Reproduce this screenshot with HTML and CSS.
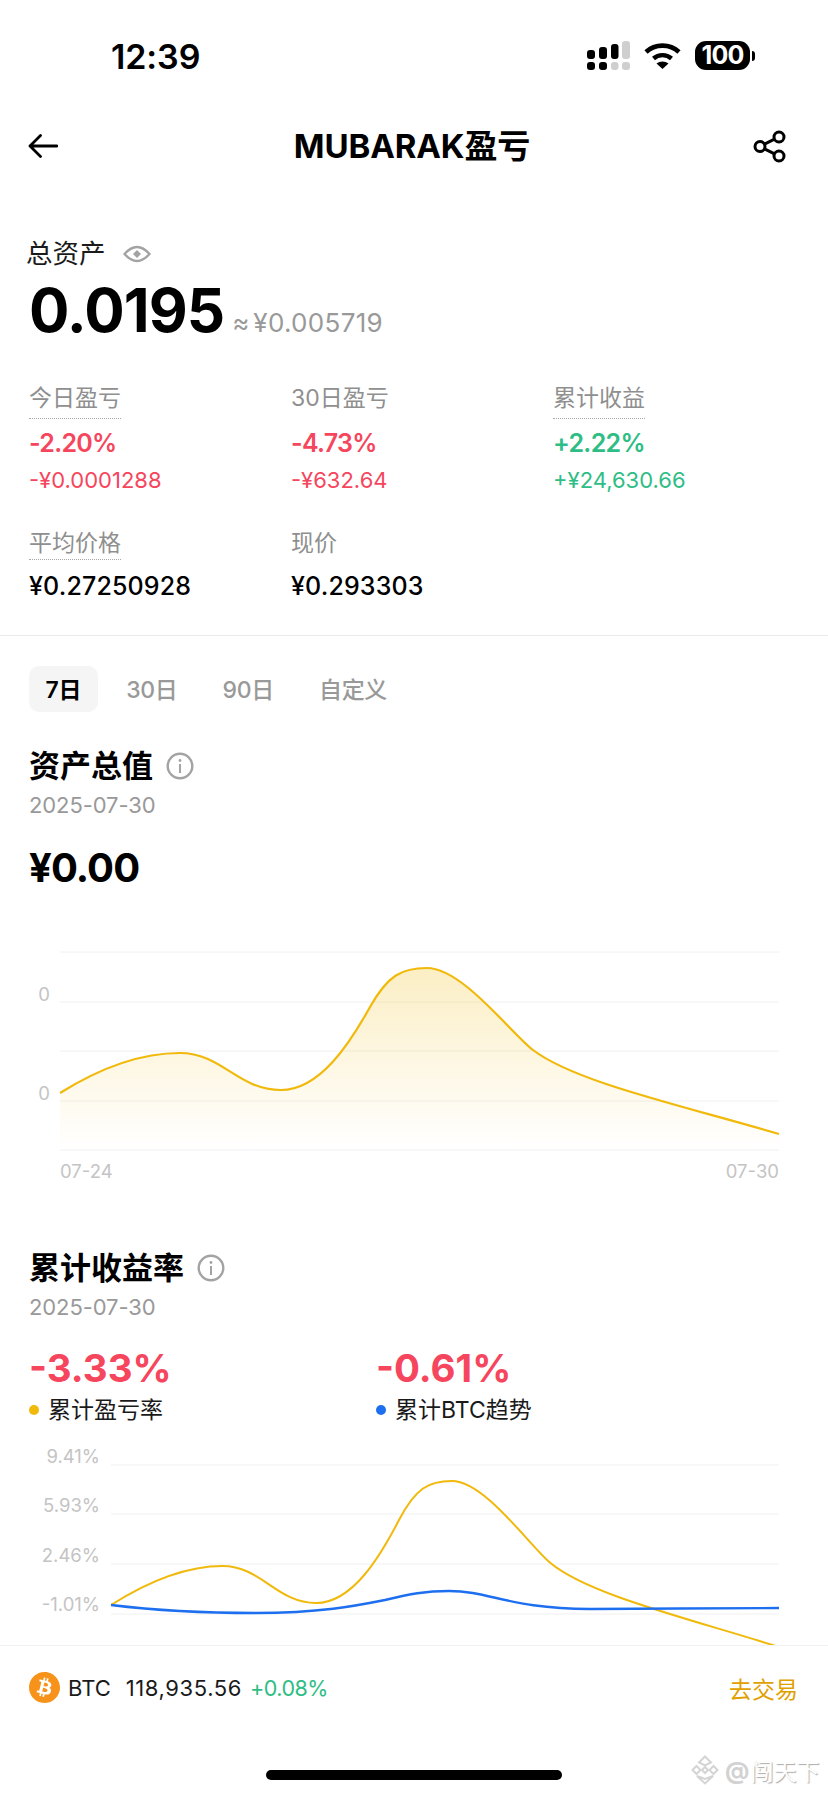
FILE: index.html
```html
<!DOCTYPE html>
<html lang="zh">
<head>
<meta charset="utf-8">
<title>MUBARAK盈亏</title>
<link rel="stylesheet" href="styles.css">
</head>
<body>
<div class="app">
  <header class="status">
    <span class="time">12:39</span>
    <div class="status-icons">
      <svg class="signal" viewBox="0 0 43 29" width="43" height="29">
        <rect x="0" y="9" width="8" height="9" rx="3" class="on"/><rect x="12" y="6" width="8" height="12" rx="3" class="on"/><rect x="24" y="3" width="7.5" height="15" rx="3" class="on"/><rect x="35" y="0" width="8" height="18" rx="3" class="off"/>
        <rect x="0" y="21" width="8" height="8" rx="3" class="on"/><rect x="12" y="21" width="8" height="8" rx="3" class="on"/><rect x="24" y="21" width="7.5" height="8" rx="3" class="off"/><rect x="35" y="21" width="8" height="8" rx="3" class="off"/>
      </svg>
      <svg class="wifi" viewBox="0 0 37 27" width="37" height="27">
        <path d="M2 10 C11 1.5 26 1.500 35 10" fill="none" stroke="#000" stroke-width="4.600"/>
        <path d="M9.500 16.500 C14.500 12 22.500 12 27.500 16.500" fill="none" stroke="#000" stroke-width="4.400"/>
        <path d="M18.500 27 L12.500 21.500 C16 18.800 21 18.800 24.500 21.500 Z" fill="#000"/>
      </svg>
      <div class="battery"><span class="battery-body">100</span><span class="battery-nub"></span></div>
    </div>
  </header>

  <nav class="nav">
    <svg class="nav-back" viewBox="0 0 30 24" width="30" height="24">
      <path d="M29 12 H2 M12.500 1.500 L2 12 L12.500 22.500" fill="none" stroke="#000" stroke-width="2.800" stroke-linecap="round" stroke-linejoin="round"/>
    </svg>
    <h1 class="nav-title">MUBARAK盈亏</h1>
    <svg class="nav-share" viewBox="0 0 33 33" width="33" height="33">
      <g fill="none" stroke="#000" stroke-width="3">
        <circle cx="26" cy="7" r="5"/><circle cx="7" cy="16.500" r="5"/><circle cx="26" cy="26" r="5"/>
        <path d="M11.500 14.200 L21.500 9.200 M11.500 18.800 L21.500 23.800"/>
      </g>
    </svg>
  </nav>

  <section class="summary">
    <div class="total-label">
      <span>总资产</span>
      <svg viewBox="0 0 28 20" width="28" height="20">
        <path d="M1.500 10 Q14 -4 26.500 10 Q14 24 1.500 10 Z" fill="none" stroke="#a3a3a3" stroke-width="2.400"/>
        <path d="M14 6 L18 10 L14 14 L10 10 Z" fill="#a3a3a3"/>
      </svg>
    </div>
    <div class="total-value">
      <span class="total-main">0.0195</span>
      <span class="total-approx">≈ ¥0.005719</span>
    </div>

    <div class="stats">
      <div class="stat">
        <span class="stat-label dotted">今日盈亏</span>
        <span class="stat-value red">-2.20%</span>
        <span class="stat-sub red">-¥0.0001288</span>
      </div>
      <div class="stat">
        <span class="stat-label">30日盈亏</span>
        <span class="stat-value red">-4.73%</span>
        <span class="stat-sub red">-¥632.64</span>
      </div>
      <div class="stat">
        <span class="stat-label dotted">累计收益</span>
        <span class="stat-value green">+2.22%</span>
        <span class="stat-sub green">+¥24,630.66</span>
      </div>
    </div>
    <div class="stats stats-second">
      <div class="stat">
        <span class="stat-label dotted tight">平均价格</span>
        <span class="stat-price">¥0.27250928</span>
      </div>
      <div class="stat">
        <span class="stat-label tight">现价</span>
        <span class="stat-price">¥0.293303</span>
      </div>
    </div>
  </section>

  <section class="content">
    <div class="tabs">
      <span class="tab active">7日</span>
      <span class="tab">30日</span>
      <span class="tab">90日</span>
      <span class="tab">自定义</span>
    </div>

    <div class="card-title first">
      <h2>资产总值</h2>
      <svg class="info" viewBox="0 0 28 28" width="28" height="28"><circle cx="14" cy="14" r="12.300" fill="none" stroke="#a3a3a3" stroke-width="2.400"/><circle cx="14" cy="8.500" r="1.400" fill="#a3a3a3"/><rect x="13" y="12" width="2" height="9" fill="#a3a3a3"/></svg>
    </div>
    <div class="card-date">2025-07-30</div>
    <div class="card-amount">¥0.00</div>
  </section>

  <svg class="chart chart-value" viewBox="0 940 828 250" width="828" height="250">
    <defs>
      <linearGradient id="areaFill" gradientUnits="userSpaceOnUse" x1="0" y1="968" x2="0" y2="1149">
        <stop offset="0" stop-color="#f0b90b" stop-opacity="0.24"/>
        <stop offset="1" stop-color="#f0b90b" stop-opacity="0"/>
      </linearGradient>
    </defs>
    <g class="grid">
      <path d="M60 952 H779 M60 1002 H779 M60 1051 H779 M60 1101 H779 M60 1150 H779"/>
    </g>
    <path d="M60 1093 C92 1073 135 1053 180 1053 C222 1053 238 1090 281 1090 C320 1090 350 1043 370 1007 C388 975 402 968 427 968 C462 968 510 1032 533 1050 C575 1082 680 1105 779 1134 V1150 H60 Z" fill="url(#areaFill)"/>
    <path class="line-yellow" d="M60 1093 C92 1073 135 1053 180 1053 C222 1053 238 1090 281 1090 C320 1090 350 1043 370 1007 C388 975 402 968 427 968 C462 968 510 1032 533 1050 C575 1082 680 1105 779 1134"/>
    <text class="axis" x="44" y="1001" text-anchor="middle">0</text>
    <text class="axis" x="44" y="1100" text-anchor="middle">0</text>
    <text class="axis" x="60" y="1178">07-24</text>
    <text class="axis" x="779" y="1178" text-anchor="end">07-30</text>
  </svg>

  <section class="content">
    <div class="card-title second">
      <h2>累计收益率</h2>
      <svg class="info" viewBox="0 0 28 28" width="28" height="28"><circle cx="14" cy="14" r="12.300" fill="none" stroke="#a3a3a3" stroke-width="2.400"/><circle cx="14" cy="8.500" r="1.400" fill="#a3a3a3"/><rect x="13" y="12" width="2" height="9" fill="#a3a3a3"/></svg>
    </div>
    <div class="card-date">2025-07-30</div>
    <div class="returns">
      <div class="return">
        <span class="return-value">-3.33%</span>
        <span class="return-legend"><i class="dot dot-yellow"></i>累计盈亏率</span>
      </div>
      <div class="return">
        <span class="return-value">-0.61%</span>
        <span class="return-legend"><i class="dot dot-blue"></i>累计BTC趋势</span>
      </div>
    </div>
  </section>

  <svg class="chart chart-rate" viewBox="0 1440 828 204" width="828" height="204">
    <g class="grid">
      <path d="M111 1464 H779 M111 1513 H779 M111 1563 H779 M111 1613 H779"/>
    </g>
    <text class="axis" x="100" y="1462" text-anchor="end">9.41%</text>
    <text class="axis" x="100" y="1511" text-anchor="end">5.93%</text>
    <text class="axis" x="100" y="1561" text-anchor="end">2.46%</text>
    <text class="axis" x="100" y="1610" text-anchor="end">-1.01%</text>
    <path class="line-yellow thin" d="M111 1604 C141 1585 181 1565 222.500 1565 C261.500 1565 276.400 1602 316.300 1602 C352.500 1602 380.400 1555 399 1519 C415.700 1487 428.700 1480 452 1480 C484.500 1480 529 1544 550.400 1562 C589.400 1594 687 1617 779 1646"/>
    <path class="line-blue" d="M111 1604 C160 1610 200 1612 255 1612 C320 1612 355 1605 385 1599 C410 1593 425 1590 449 1590 C490 1590 510 1608 590 1608 C650 1608 720 1607 779 1607"/>
  </svg>

  <footer class="ticker">
    <div class="ticker-left">
      <svg class="btc" viewBox="0 0 24 24" width="31" height="31"><path fill="#f7931a" d="M23.638 14.904c-1.602 6.43-8.113 10.34-14.542 8.736C2.67 22.05-1.244 15.525.362 9.105 1.962 2.67 8.475-1.243 14.9.358c6.43 1.605 10.342 8.115 8.738 14.548v-.002zm-6.35-4.613c.24-1.59-.974-2.45-2.64-3.03l.54-2.153-1.315-.33-.525 2.107c-.345-.087-.705-.167-1.064-.25l.526-2.127-1.32-.33-.54 2.165c-.285-.067-.565-.132-.84-.2l-1.815-.45-.35 1.407s.975.225.955.236c.535.136.63.486.615.766l-1.477 5.92c-.075.166-.24.406-.614.314.015.02-.96-.24-.96-.24l-.66 1.51 1.71.426.93.242-.54 2.19 1.32.327.54-2.17c.36.1.705.19 1.05.273l-.51 2.154 1.32.33.545-2.19c2.24.427 3.93.257 4.64-1.774.57-1.637-.03-2.58-1.217-3.196.854-.193 1.5-.76 1.68-1.93h.01zm-3.01 4.22c-.404 1.64-3.157.75-4.05.53l.72-2.9c.896.23 3.757.67 3.33 2.37zm.41-4.24c-.37 1.49-2.662.735-3.405.55l.654-2.64c.744.18 3.137.524 2.75 2.084v.006z"/></svg>
      <span class="ticker-name">BTC</span>
      <span class="ticker-price">118,935.56</span>
      <span class="ticker-change">+0.08%</span>
    </div>
    <span class="ticker-action">去交易</span>
  </footer>

  <div class="home-wrap"><span class="home-bar"></span></div>

  <div class="watermark">
    <svg viewBox="0 0 28 30" width="28" height="30">
      <g fill="none" stroke="#d4d4d4" stroke-width="2">
        <path d="M14 1.500 L20 7.500 L14 10.500 L8 7.500 Z"/>
        <path d="M1.500 15 L5.500 11 L9.500 15 L5.500 19 Z"/>
        <path d="M26.500 15 L22.500 11 L18.500 15 L22.500 19 Z"/>
        <path d="M14 12 L17 15 L14 18 L11 15 Z"/>
        <path d="M6 21 L14 28.500 L22 21 L14 24 Z"/>
      </g>
    </svg>
    <span class="wm-at">@</span>
    <span class="wm-name">闯天下</span>
  </div>
</div>
</body>
</html>
```
FILE: styles.css
```css
* { box-sizing: border-box; }
html, body { margin: 0; padding: 0; background: #fff; }
body {
  font-family: Inter, "Noto Sans CJK SC", sans-serif;
  color: #000;
}
.app { position: relative; width: 828px; height: 1795px; overflow: hidden; background: #fff; }

.status { height: 100px; display: flex; justify-content: space-between; padding: 41px 73px 0 111px; }
.time { font-size: 34px; font-weight: 600; line-height: 32px; letter-spacing: -0.1px; }
.status-icons { display: flex; align-items: flex-start; margin-left: auto; }
.signal { display: block; margin-right: 14px; }
.signal .on { fill: #000; }
.signal .off { fill: #cfcfcf; }
.wifi { display: block; margin-top: 1px; margin-right: 14px; }
.battery { display: flex; align-items: center; }
.battery-body {
  width: 55px; height: 29px; background: #000; color: #fff; border-radius: 11px;
  font-size: 25px; font-weight: 700; line-height: 29px; text-align: center; letter-spacing: -0.8px;
}
.battery-nub { width: 3px; height: 10px; background: #000; border-radius: 0 3px 3px 0; margin-left: 2px; }

.nav { height: 92px; display: grid; grid-template-columns: 1fr auto 1fr; align-items: center; padding: 0 42px 0 28px; }
.nav-title { font-size: 33px; font-weight: 700; margin: 0 0 0 10px; line-height: 40px; letter-spacing: -0.1px; }
.nav-back, .nav-share { display: block; }
.nav-share { justify-self: end; }

.summary { padding: 46px 0 0 29px; border-bottom: 1px solid #eaeaea; height: 444px; }
.total-label { display: flex; align-items: center; height: 30px; font-size: 26.500px; line-height: 30px; color: #1a1a1a; gap: 17px; margin-left: -3px; }
.total-label svg { display: block; margin-top: 2px; }
.total-value { display: flex; align-items: baseline; height: 60px; margin-top: 12px; }
.total-main { font-size: 60px; font-weight: 700; line-height: 60px; letter-spacing: -0.9px; }
.total-approx { font-size: 26px; color: #999; margin-left: 8px; word-spacing: -4px; letter-spacing: 0.3px; }

.stats { display: grid; grid-template-columns: repeat(3, 262px); margin-top: 43px; }
.stats-second { margin-top: 32px; }
.stat { display: flex; flex-direction: column; align-items: flex-start; }
.stat-label { font-size: 23px; line-height: 30px; color: #8f8f8f; padding-bottom: 5px; border-bottom: 1px solid transparent; }
.stat-label.dotted { border-bottom: 1px dotted #a8a8a8; }
.stat-label.tight { padding-bottom: 1px; }
.stat-value { font-size: 25px; font-weight: 600; line-height: 32px; margin-top: 8px; letter-spacing: -0.7px; }
.stat-sub { font-size: 22px; line-height: 32px; margin-top: 5px; }
.stat-price { font-size: 25px; font-weight: 500; line-height: 32px; margin-top: 10px; letter-spacing: 0.15px; }
.red { color: #f6465d; }
.green { color: #2ebd85; }

.content { padding: 0 29px; }
.tabs { display: flex; gap: 12px; margin-top: 30px; height: 46px; }
.tab { display: flex; align-items: center; padding: 0 16.500px 2px; font-size: 23px; font-weight: 500; color: #999; border-radius: 10px; letter-spacing: -0.3px; }
.tab.active { background: #f5f5f5; color: #000; font-weight: 600; }

.card-title { display: flex; align-items: center; height: 40px; gap: 13px; }
.card-title.first { margin-top: 34px; }
.card-title.second { margin-top: 58px; }
.card-title h2 { margin: 0; font-size: 31px; font-weight: 700; line-height: 40px; }
.info { display: block; }
.card-date { font-size: 22px; line-height: 30px; color: #999; margin-top: 4px; letter-spacing: -0.1px; }
.card-amount { font-size: 40px; font-weight: 700; line-height: 50px; margin-top: 23px; letter-spacing: -0.9px; }

.chart { display: block; margin-top: 47px; }
.grid path { stroke: #f0f0f0; stroke-width: 1; fill: none; }
.line-yellow { fill: none; stroke: #f0b90b; stroke-width: 2.200; }
.line-yellow.thin { stroke-width: 2; }
.line-blue { fill: none; stroke: #1e6ff0; stroke-width: 2.400; }
.axis { font-size: 18.500px; fill: #c4c4c4; font-family: Inter, sans-serif; }

.returns { display: grid; grid-template-columns: 347px 1fr; margin-top: 21px; }
.return { display: flex; flex-direction: column; }
.return-value { font-size: 38.500px; font-weight: 700; line-height: 50px; color: #f6465d; }
.return-legend { display: flex; align-items: center; font-size: 23px; line-height: 30px; color: #1a1a1a; margin-top: 2px; }
.dot { width: 10px; height: 10px; border-radius: 50%; margin-right: 9px; }
.dot-yellow { background: #f0b90b; }
.dot-blue { background: #1e6ff0; }

.chart-rate { margin-top: 16px; }

.ticker { height: 86px; border-top: 1px solid #f2f2f2; display: flex; align-items: center; justify-content: space-between; padding: 0 30px 2px 29px; }
.ticker-left { display: flex; align-items: center; }
.btc { display: block; margin-right: 8px; }
.ticker-name { font-size: 22px; color: #1a1a1a; margin-right: 15px; }
.ticker-price { font-size: 22px; color: #1a1a1a; margin-right: 8px; letter-spacing: 0.6px; }
.ticker-change { font-size: 21.500px; color: #2ebd85; letter-spacing: -0.5px; }
.ticker-action { font-size: 23px; color: #e0a100; }

.home-wrap { display: flex; justify-content: center; margin-top: 39px; }
.home-bar { width: 296px; height: 10px; background: #000; border-radius: 5px; }

.watermark { position: absolute; left: 691px; top: 1755px; display: flex; align-items: center; gap: 6px; height: 30px; }
.watermark svg { display: block; }
.wm-at { font-size: 24px; font-weight: 700; color: #d2d2d2; }
.wm-name { font-size: 23px; color: #fff; text-shadow: 1px 1px 1px #aaa; margin-left: -5px; }
```
